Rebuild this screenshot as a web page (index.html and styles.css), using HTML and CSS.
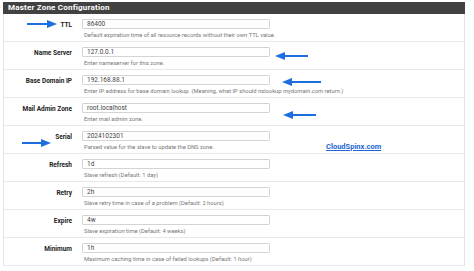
FILE: index.html
```
<!DOCTYPE html>
<html lang="en">
<head>
  <meta charset="UTF-8" />
  <title>Master Zone Configuration</title>
  <link rel="stylesheet" href="styles.css">
</head>
<body>
  <div class="page">
    <div class="panel">
      <div class="panel-heading">Master Zone Configuration</div>

      <div class="row">
        <label>TTL</label>
        <div class="field">
          <input type="text" value="86400">
          <span class="help">Default expiration time of all resource records without their own TTL value.</span>
        </div>
      </div>

      <div class="row">
        <label>Name Server</label>
        <div class="field">
          <input type="text" value="127.0.0.1">
          <span class="help">Enter nameserver for this zone.</span>
        </div>
      </div>

      <div class="row">
        <label>Base Domain IP</label>
        <div class="field">
          <input type="text" value="192.168.88.1">
          <span class="help">Enter IP address for base domain lookup. (Meaning, what IP should nslookup mydomain.com return.)</span>
        </div>
      </div>

      <div class="row">
        <label>Mail Admin Zone</label>
        <div class="field">
          <input type="text" value="root.localhost">
          <span class="help">Enter mail admin zone.</span>
        </div>
      </div>

      <div class="row">
        <label>Serial</label>
        <div class="field">
          <input type="text" value="2024102301">
          <span class="help">Parsed value for the slave to update the DNS zone.</span>
        </div>
      </div>

      <div class="row">
        <label>Refresh</label>
        <div class="field">
          <input type="text" value="1d">
          <span class="help">Slave refresh (Default: 1 day)</span>
        </div>
      </div>

      <div class="row">
        <label>Retry</label>
        <div class="field">
          <input type="text" value="2h">
          <span class="help">Slave retry time in case of a problem (Default: 2 hours)</span>
        </div>
      </div>

      <div class="row">
        <label>Expire</label>
        <div class="field">
          <input type="text" value="4w">
          <span class="help">Slave expiration time (Default: 4 weeks)</span>
        </div>
      </div>

      <div class="row">
        <label>Minimum</label>
        <div class="field">
          <input type="text" value="1h">
          <span class="help">Maximum caching time in case of failed lookups (Default: 1 hour)</span>
        </div>
      </div>
    </div>

    <!-- annotation arrows drawn over the screenshot -->
    <svg class="arrow arrow-ttl" width="30" height="8" viewBox="0 0 30 8"><line x1="0" y1="4" x2="23" y2="4" /><polygon points="20,0 30,4 20,8" /></svg>
    <svg class="arrow arrow-ns" width="33" height="8" viewBox="0 0 33 8"><line x1="7" y1="4" x2="33" y2="4" /><polygon points="10,0 0,4 10,8" /></svg>
    <svg class="arrow arrow-ip" width="39" height="8" viewBox="0 0 39 8"><line x1="7" y1="4" x2="39" y2="4" /><polygon points="10,0 0,4 10,8" /></svg>
    <svg class="arrow arrow-mail" width="33" height="8" viewBox="0 0 33 8"><line x1="7" y1="4" x2="33" y2="4" /><polygon points="10,0 0,4 10,8" /></svg>
    <svg class="arrow arrow-serial" width="29" height="8" viewBox="0 0 29 8"><line x1="0" y1="4" x2="22" y2="4" /><polygon points="19,0 29,4 19,8" /></svg>

    <span class="watermark">CloudSpinx.com</span>
  </div>
</body>
</html>
```

FILE: styles.css
```
* {
  box-sizing: border-box;
}

body {
  margin: 0;
  background: #ffffff;
  font-family: Roboto, "Liberation Sans", Arial, sans-serif;
  color: #333;
}

.page {
  position: relative;
  padding: 2px 0 0 3px;
  width: 474px;
  height: 271px;
  overflow: hidden;
}

.panel {
  width: 462px;
  border-left: 1px solid #e3e3e3;
  border-right: 1px solid #e3e3e3;
}

.panel-heading {
  height: 12px;
  margin-left: -1px;
  margin-right: -1px;
  background: #424242;
  color: #fff;
  font-size: 8px;
  font-weight: bold;
  line-height: 12px;
  padding-left: 5px;
  letter-spacing: 0.2px;
}

.row {
  display: flex;
  height: 28px;
  border-bottom: 1px solid #e8e8e8;
  gap: 10px;
}

.row label {
  width: 68px;
  flex: none;
  text-align: right;
  font-size: 6.5px;
  font-weight: bold;
  color: #222;
  padding-top: 7px;
}

.field {
  display: flex;
  flex-direction: column;
  padding-top: 5px;
}

.field input {
  width: 188px;
  height: 10px;
  margin: 0;
  padding: 0 4px;
  border: 1px solid #d4d4d4;
  border-radius: 1px;
  font-family: Roboto, "Liberation Sans", Arial, sans-serif;
  font-size: 6.5px;
  color: #444;
  background: #fff;
  outline: none;
}

.help {
  margin-top: 3px;
  padding-left: 2px;
  font-size: 5.8px;
  color: #777;
  white-space: nowrap;
}

.arrow {
  position: absolute;
}

.arrow line {
  stroke: #1f6ee0;
  stroke-width: 2;
}

.arrow polygon {
  fill: #1f6ee0;
}

.arrow-ttl { left: 27px; top: 20px; }
.arrow-ns { left: 275px; top: 52px; }
.arrow-ip { left: 282px; top: 78px; }
.arrow-mail { left: 283px; top: 111px; }
.arrow-serial { left: 22px; top: 139px; }

.watermark {
  position: absolute;
  left: 326px;
  top: 142px;
  font-size: 7.5px;
  font-weight: bold;
  color: #2266d6;
  text-decoration: underline;
}
```
